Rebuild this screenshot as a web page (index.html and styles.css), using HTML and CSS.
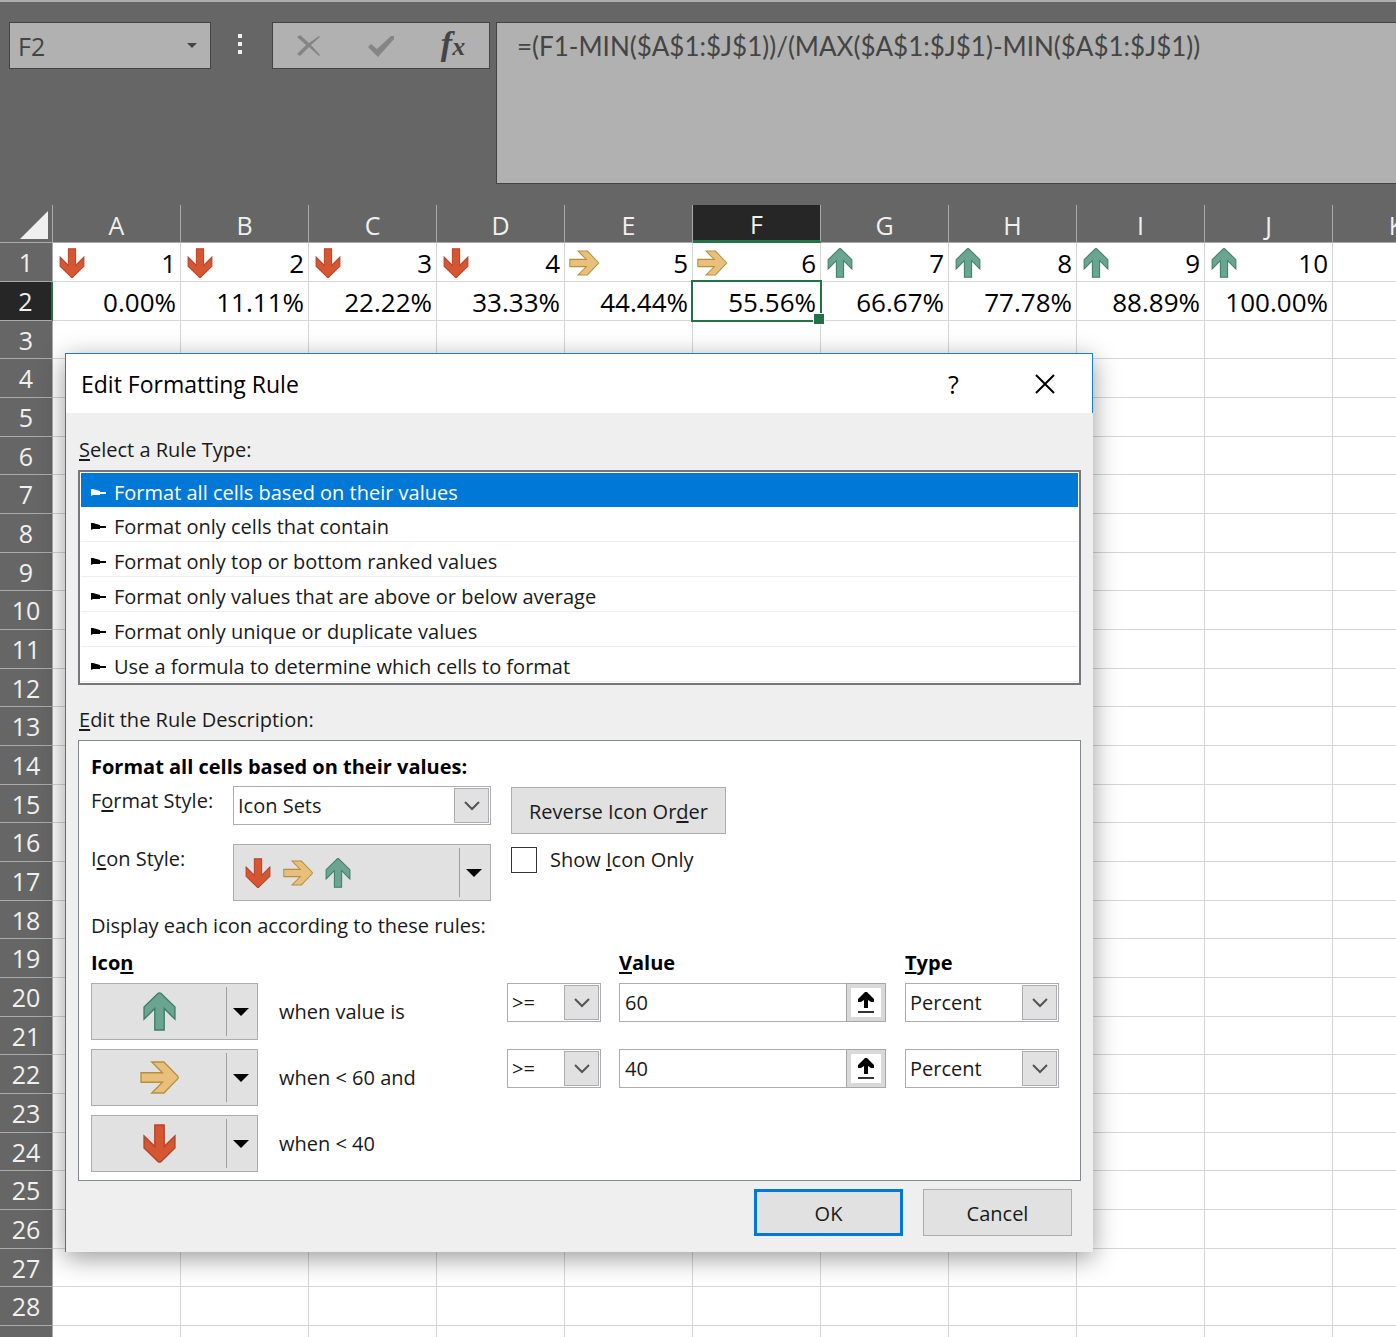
FILE: index.html
```
<!DOCTYPE html>
<html lang="en">
<head>
  <meta charset="UTF-8">
  <title>Edit Formatting Rule</title>
  <link rel="stylesheet" href="styles.css">
</head>
<body>
  <!-- shared icons -->
  <svg class="defs" width="0" height="0">
    <symbol id="down" viewBox="0 0 116 116">
      <path d="M44 3H72V67L104 35V71L62 112Q58 115 54 112L12 71V35L44 67Z" stroke-width="4"/>
    </symbol>
    <symbol id="up" viewBox="0 0 116 116">
      <path d="M44 113H72V49L104 81V45L62 4Q58 1 54 4L12 45V81L44 49Z" stroke-width="4"/>
    </symbol>
    <symbol id="side" viewBox="0 0 116 116">
      <path d="M3 44V72H67L35 104H71L112 62Q115 58 112 54L71 12H35L67 44Z" stroke-width="4"/>
    </symbol>
    <symbol id="chevron" viewBox="0 0 16 10">
      <path d="M1 1L8 8L15 1" fill="none" stroke="#555" stroke-width="2"/>
    </symbol>
    <symbol id="caret" viewBox="0 0 16 8">
      <path d="M0 0H16L8 8Z"/>
    </symbol>
    <symbol id="pointer" viewBox="0 0 16 10">
      <path d="M0 1H2L9 3V4H15V6H9V7H2L0 8Z"/>
    </symbol>
    <symbol id="collapse" viewBox="0 0 18 24">
      <path d="M8 1H10L17 8V11H14L11 9V17H7V9L4 11H1V8Z"/>
      <path d="M1 20H17V22H1Z" fill="#333"/>
    </symbol>
  </svg>

  <div class="app">
    <div class="formula-bar">
      <div class="name-box">
        <input type="text" class="name-input" value="F2" aria-label="Name box">
        <button class="name-button" aria-label="Show names"><svg width="10" height="5" viewBox="0 0 10 5"><path d="M0 0H10L5 5Z" fill="#444"/></svg></button>
      </div>
      <div class="dots"><span></span><span></span><span></span></div>
      <div class="formula-buttons">
        <button aria-label="Cancel entry">
          <svg width="24" height="22" viewBox="0 0 24 22"><path d="M0 2L3 0L12 8L22 1L23 2L14 10L23 20L22 21L12 12L3 21L0 19L9 10Z" fill="#858585"/></svg>
        </button>
        <button aria-label="Enter">
          <svg width="26" height="22" viewBox="0 0 26 22"><path d="M0 12L3 9L9 14L23 1L26 1V4L10 22Z" fill="#858585"/></svg>
        </button>
        <button class="fx" aria-label="Insert function">f<small>x</small></button>
      </div>
      <textarea class="formula" aria-label="Formula">=(F1-MIN($A$1:$J$1))/(MAX($A$1:$J$1)-MIN($A$1:$J$1))</textarea>
    </div>

    <div class="sheet">
      <table class="grid">
        <thead>
          <tr>
            <th class="corner"><svg width="28" height="28" viewBox="0 0 28 28"><path d="M28 0V28H0Z" fill="#f0f0f0"/></svg></th>
            <th>A</th><th>B</th><th>C</th><th>D</th><th>E</th><th class="active">F</th><th>G</th><th>H</th><th>I</th><th>J</th><th>K</th>
          </tr>
        </thead>
        <tbody id="rows">
          <tr>
            <th>1</th>
            <td><div class="cell"><svg class="arrow red"><use href="#down"/></svg>1</div></td>
            <td><div class="cell"><svg class="arrow red"><use href="#down"/></svg>2</div></td>
            <td><div class="cell"><svg class="arrow red"><use href="#down"/></svg>3</div></td>
            <td><div class="cell"><svg class="arrow red"><use href="#down"/></svg>4</div></td>
            <td><div class="cell"><svg class="arrow yellow"><use href="#side"/></svg>5</div></td>
            <td><div class="cell"><svg class="arrow yellow"><use href="#side"/></svg>6</div></td>
            <td><div class="cell"><svg class="arrow green"><use href="#up"/></svg>7</div></td>
            <td><div class="cell"><svg class="arrow green"><use href="#up"/></svg>8</div></td>
            <td><div class="cell"><svg class="arrow green"><use href="#up"/></svg>9</div></td>
            <td><div class="cell"><svg class="arrow green"><use href="#up"/></svg>10</div></td>
            <td></td>
          </tr>
          <tr>
            <th class="active">2</th>
            <td>0.00%</td><td>11.11%</td><td>22.22%</td><td>33.33%</td><td>44.44%</td><td class="selected">55.56%</td><td>66.67%</td><td>77.78%</td><td>88.89%</td><td>100.00%</td><td></td>
          </tr>
        </tbody>
      </table>
    </div>
  </div>

  <div class="dialog" role="dialog" aria-labelledby="dialogTitle">
    <div class="title-bar">
      <h1 id="dialogTitle">Edit Formatting Rule</h1>
      <button class="title-button" aria-label="Help">?</button>
      <button class="title-button" aria-label="Close">
        <svg width="20" height="20" viewBox="0 0 20 20"><path d="M1 1L19 19M19 1L1 19" stroke="#000" stroke-width="2"/></svg>
      </button>
    </div>

    <div class="dialog-body">
      <p class="label" id="typeLabel"><u>S</u>elect a Rule Type:</p>
      <div class="rule-list" role="radiogroup" aria-labelledby="typeLabel">
        <label class="rule chosen"><input type="radio" name="rule" checked><svg><use href="#pointer"/></svg>Format all cells based on their values</label>
        <label class="rule"><input type="radio" name="rule"><svg><use href="#pointer"/></svg>Format only cells that contain</label>
        <label class="rule"><input type="radio" name="rule"><svg><use href="#pointer"/></svg>Format only top or bottom ranked values</label>
        <label class="rule"><input type="radio" name="rule"><svg><use href="#pointer"/></svg>Format only values that are above or below average</label>
        <label class="rule"><input type="radio" name="rule"><svg><use href="#pointer"/></svg>Format only unique or duplicate values</label>
        <label class="rule"><input type="radio" name="rule"><svg><use href="#pointer"/></svg>Use a formula to determine which cells to format</label>
      </div>

      <p class="label second"><u>E</u>dit the Rule Description:</p>
      <div class="description">
        <h2>Format all cells based on their values:</h2>
        <div class="options">
          <div class="style-fields">
            <label for="formatStyle">F<u>o</u>rmat Style:</label>
            <span class="combo">
              <select id="formatStyle"><option>Icon Sets</option></select>
              <span class="drop"><svg><use href="#chevron"/></svg></span>
            </span>
            <label for="iconStyle">I<u>c</u>on Style:</label>
            <button class="split icon-style" id="iconStyle">
              <span class="icons">
                <svg class="arrow red"><use href="#down"/></svg>
                <svg class="arrow yellow"><use href="#side"/></svg>
                <svg class="arrow green"><use href="#up"/></svg>
              </span>
              <span class="split-drop"><svg><use href="#caret"/></svg></span>
            </button>
          </div>
          <div class="side-fields">
            <button class="btn reverse">Reverse Icon Or<u>d</u>er</button>
            <label class="check"><input type="checkbox"><span>Show <u>I</u>con Only</span></label>
          </div>
        </div>

        <p class="hint">Display each icon according to these rules:</p>
        <div class="rules head">
          <b>Ico<u>n</u></b><span></span><span></span><b><u>V</u>alue</b><b><u>T</u>ype</b>
        </div>
        <div class="rules">
          <button class="split" aria-label="First icon">
            <span class="icons"><svg class="arrow big green"><use href="#up"/></svg></span>
            <span class="split-drop"><svg><use href="#caret"/></svg></span>
          </button>
          <span class="when">when value is</span>
          <span class="combo op">
            <select aria-label="First operator"><option>&gt;=</option></select>
            <span class="drop"><svg><use href="#chevron"/></svg></span>
          </span>
          <span class="value">
            <input type="text" value="60" aria-label="First value">
            <button aria-label="Pick first cell"><svg><use href="#collapse"/></svg></button>
          </span>
          <span class="combo">
            <select aria-label="First type"><option>Percent</option></select>
            <span class="drop"><svg><use href="#chevron"/></svg></span>
          </span>
        </div>
        <div class="rules">
          <button class="split" aria-label="Second icon">
            <span class="icons"><svg class="arrow big yellow"><use href="#side"/></svg></span>
            <span class="split-drop"><svg><use href="#caret"/></svg></span>
          </button>
          <span class="when">when &lt; 60 and</span>
          <span class="combo op">
            <select aria-label="Second operator"><option>&gt;=</option></select>
            <span class="drop"><svg><use href="#chevron"/></svg></span>
          </span>
          <span class="value">
            <input type="text" value="40" aria-label="Second value">
            <button aria-label="Pick second cell"><svg><use href="#collapse"/></svg></button>
          </span>
          <span class="combo">
            <select aria-label="Second type"><option>Percent</option></select>
            <span class="drop"><svg><use href="#chevron"/></svg></span>
          </span>
        </div>
        <div class="rules">
          <button class="split" aria-label="Third icon">
            <span class="icons"><svg class="arrow big red"><use href="#down"/></svg></span>
            <span class="split-drop"><svg><use href="#caret"/></svg></span>
          </button>
          <span class="when">when &lt; 40</span>
        </div>
      </div>

      <div class="footer">
        <button class="btn ok">OK</button>
        <button class="btn">Cancel</button>
      </div>
    </div>
  </div>

  <script>
    // fill the rest of the sheet with empty rows
    const rows = document.getElementById('rows');
    for (let n = 3; n <= 29; n++) {
      const tr = document.createElement('tr');
      tr.innerHTML = '<th>' + n + '</th>' + '<td></td>'.repeat(11);
      rows.appendChild(tr);
    }
  </script>
</body>
</html>
```

FILE: styles.css
```
* {
  box-sizing: border-box;
}
body {
  margin: 0;
  font-family: "Open Sans", sans-serif;
  font-size: 20px;
  line-height: 26px;
  color: #1a1a1a;
}
button, input, select, textarea {
  font: inherit;
  color: inherit;
  margin: 0;
  border-radius: 0;
}
button {
  padding: 0;
}
h1, h2, p {
  margin: 0;
}
u {
  text-underline-offset: 2px;
}
.defs {
  position: absolute;
}
.app {
  height: 100vh;
  display: flex;
  flex-direction: column;
  overflow: hidden;
  background: #666;
  border-top: 2px solid #aeaeae;
}

/* formula bar */
.formula-bar {
  display: flex;
  align-items: flex-start;
  padding: 20px 0 21px 9px;
}
.name-box {
  display: flex;
  width: 202px;
  height: 47px;
  background: #b1b1b1;
  border: 1px solid #444;
}
.name-input {
  flex: 1;
  min-width: 0;
  padding: 0 8px;
  border: none;
  background: none;
  font-size: 25px;
  color: #444;
}
.name-button {
  width: 36px;
  border: none;
  background: none;
}
.name-button svg {
  display: block;
  margin: 0 auto;
}
.dots {
  display: flex;
  flex-direction: column;
  gap: 4px;
  width: 61px;
  padding: 12px 0 0 27px;
}
.dots span {
  width: 4px;
  height: 4px;
  background: #f0f0f0;
}
.formula-buttons {
  display: flex;
  width: 218px;
  height: 47px;
  background: #b1b1b1;
  border: 1px solid #444;
}
.formula-buttons button {
  flex: 1;
  border: none;
  background: none;
}
.formula-buttons svg {
  display: block;
  margin: 0 auto;
}
.formula-buttons .fx {
  font: italic bold 34px/34px "Liberation Serif", serif;
  color: #444;
}
.fx small {
  font-size: 26px;
}
.formula {
  flex: 1;
  height: 162px;
  margin-left: 6px;
  padding: 7px 20px;
  border: 1px solid #444;
  border-right: none;
  background: #b1b1b1;
  color: #444;
  font-family: Lato, sans-serif;
  font-size: 26px;
  line-height: 32px;
  resize: none;
}

/* sheet */
.sheet {
  flex: 1;
  overflow: hidden;
  background: #fff;
}
.grid {
  width: 1461px;
  table-layout: fixed;
  border-collapse: separate;
  border-spacing: 0;
  font-size: 26px;
  color: #000;
}
.grid th {
  padding: 0;
  font-size: 25px;
  font-weight: normal;
  color: #f0f0f0;
  background: #666;
  border-right: 1px solid #aaa;
  border-bottom: 1px solid #aaa;
}
.grid thead th {
  height: 38px;
  padding-top: 2px;
}
.grid .corner {
  width: 53px;
}
.corner svg {
  display: block;
  margin: 0 4px 0 auto;
}
.grid tbody tr {
  height: 39px;
}
.grid tbody tr:nth-child(3n) {
  height: 38px;
}
.grid td {
  padding: 1px 4px 0;
  text-align: right;
  border-right: 1px solid #d6d6d6;
  border-bottom: 1px solid #d6d6d6;
}
.grid .active {
  background: #262626;
}
.grid thead .active {
  border-bottom: 3px solid #217346;
}
.grid tbody .active {
  border-right: 2px solid #217346;
}
.cell {
  display: flex;
  align-items: center;
  justify-content: space-between;
}
.selected {
  position: relative;
}
.selected::before {
  content: "";
  position: absolute;
  inset: -2px;
  border: 2px solid #217346;
}
.selected::after {
  content: "";
  position: absolute;
  right: -5px;
  bottom: -5px;
  width: 10px;
  height: 10px;
  background: #217346;
  border: 1px solid #fff;
}

.arrow {
  display: block;
  width: 30px;
  height: 30px;
}
.arrow.big {
  width: 39px;
  height: 39px;
}
.red {
  fill: #d65532;
  stroke: #b3452a;
}
.yellow {
  fill: #e8c07c;
  stroke: #b5903c;
}
.green {
  fill: #6ba592;
  stroke: #3f7d69;
}

/* dialog */
.dialog {
  position: absolute;
  left: 65px;
  top: 353px;
  width: 1028px;
  background: #efefef;
  border-top: 1px solid #1a7fcf;
  border-left: 1px solid #1a7fcf;
  box-shadow: 0 6px 24px rgba(0, 0, 0, 0.4);
}
.title-bar {
  display: flex;
  align-items: center;
  height: 59px;
  padding: 0 2px 0 15px;
  background: #fff;
  border-right: 1px solid #1a7fcf;
}
.title-bar h1 {
  flex: 1;
  font-size: 23px;
  font-weight: normal;
  color: #000;
}
.title-button {
  width: 91px;
  height: 59px;
  border: none;
  background: none;
  font-size: 25px;
  color: #000;
}
.title-button svg {
  display: block;
  margin: 0 auto;
}
.dialog-body {
  padding: 24px 12px 16px;
}
.label {
  padding-left: 1px;
  margin-bottom: 7px;
}
.label.second {
  margin-top: 22px;
}
.rule-list {
  padding: 1px;
  background: #fff;
  border: 2px solid #76767c;
}
.rule {
  display: flex;
  align-items: center;
  height: 35px;
  padding: 5px 0 0 10px;
  border-bottom: 1px solid #eee;
}
.rule input {
  appearance: none;
  width: 0;
}
.rule svg {
  width: 16px;
  height: 10px;
  margin-right: 7px;
}
.rule.chosen {
  height: 34px;
  background: #0078d7;
  border-bottom: none;
  color: #fff;
  fill: #fff;
}
.description {
  padding: 13px 21px 8px 12px;
  background: #fff;
  border: 1px solid #828790;
}
.description h2 {
  margin-bottom: 6px;
  font-size: 20px;
  color: #000;
}
.options {
  display: flex;
  gap: 20px;
}
.style-fields {
  display: grid;
  grid-template-columns: 142px 258px;
  row-gap: 19px;
}
.style-fields label {
  padding-top: 2px;
}
.combo {
  display: grid;
  height: 39px;
}
.combo select {
  grid-area: 1 / 1;
  appearance: none;
  width: 100%;
  padding: 0 4px;
  border: 1px solid #abadb3;
  background: #fff;
}
.drop {
  grid-area: 1 / 1;
  justify-self: end;
  display: flex;
  align-items: center;
  justify-content: center;
  width: 35px;
  margin: 2px;
  background: #e1e1e1;
  border: 1px solid #adadad;
  pointer-events: none;
}
.drop svg {
  width: 16px;
  height: 10px;
}
.split {
  display: flex;
  align-items: stretch;
  width: 167px;
  height: 57px;
  background: #e1e1e1;
  border: 1px solid #adadad;
}
.split .icons {
  flex: 1;
  display: flex;
  align-items: center;
  justify-content: center;
}
.split-drop {
  display: flex;
  align-items: center;
  justify-content: center;
  width: 28px;
  margin: 3px 3px 3px 0;
  border-left: 1px solid #a0a0a0;
}
.split-drop svg {
  width: 16px;
  height: 8px;
}
.icon-style {
  width: 258px;
}
.icon-style .icons {
  justify-content: flex-start;
  gap: 10px;
  padding-left: 9px;
}
.side-fields {
  display: flex;
  flex-direction: column;
  gap: 13px;
  padding-top: 1px;
}
.btn {
  width: 149px;
  height: 47px;
  padding-top: 2px;
  background: #e1e1e1;
  border: 1px solid #adadad;
}
.reverse {
  width: 215px;
}
.check {
  display: flex;
  align-items: center;
}
.check input {
  appearance: none;
  width: 26px;
  height: 26px;
  margin-right: 13px;
  border: 1px solid #333;
  background: #fff;
}
.hint {
  margin: 12px 0 11px;
}
.rules {
  display: grid;
  grid-template-columns: 188px 228px 112px minmax(0, 1fr) 154px;
  margin-bottom: 9px;
}
.rules.head {
  margin-bottom: 7px;
  color: #000;
}
.rules:last-child {
  margin-bottom: 0;
}
.when {
  align-self: center;
}
.op {
  width: 94px;
}
.value {
  display: flex;
  height: 39px;
  margin-right: 19px;
  border: 1px solid #abadb3;
}
.value input {
  flex: 1;
  min-width: 0;
  padding: 0 5px;
  border: none;
}
.value button {
  width: 38px;
  background: #fff;
  border: 4px solid #d9d9d9;
  outline: 1px solid #a6a6a6;
}
.value svg {
  display: block;
  width: 18px;
  height: 24px;
  margin: 0 auto;
}
.footer {
  display: flex;
  justify-content: flex-end;
  gap: 20px;
  padding: 8px 9px 0 0;
}
.ok {
  border: 3px solid #0078d7;
}
```
